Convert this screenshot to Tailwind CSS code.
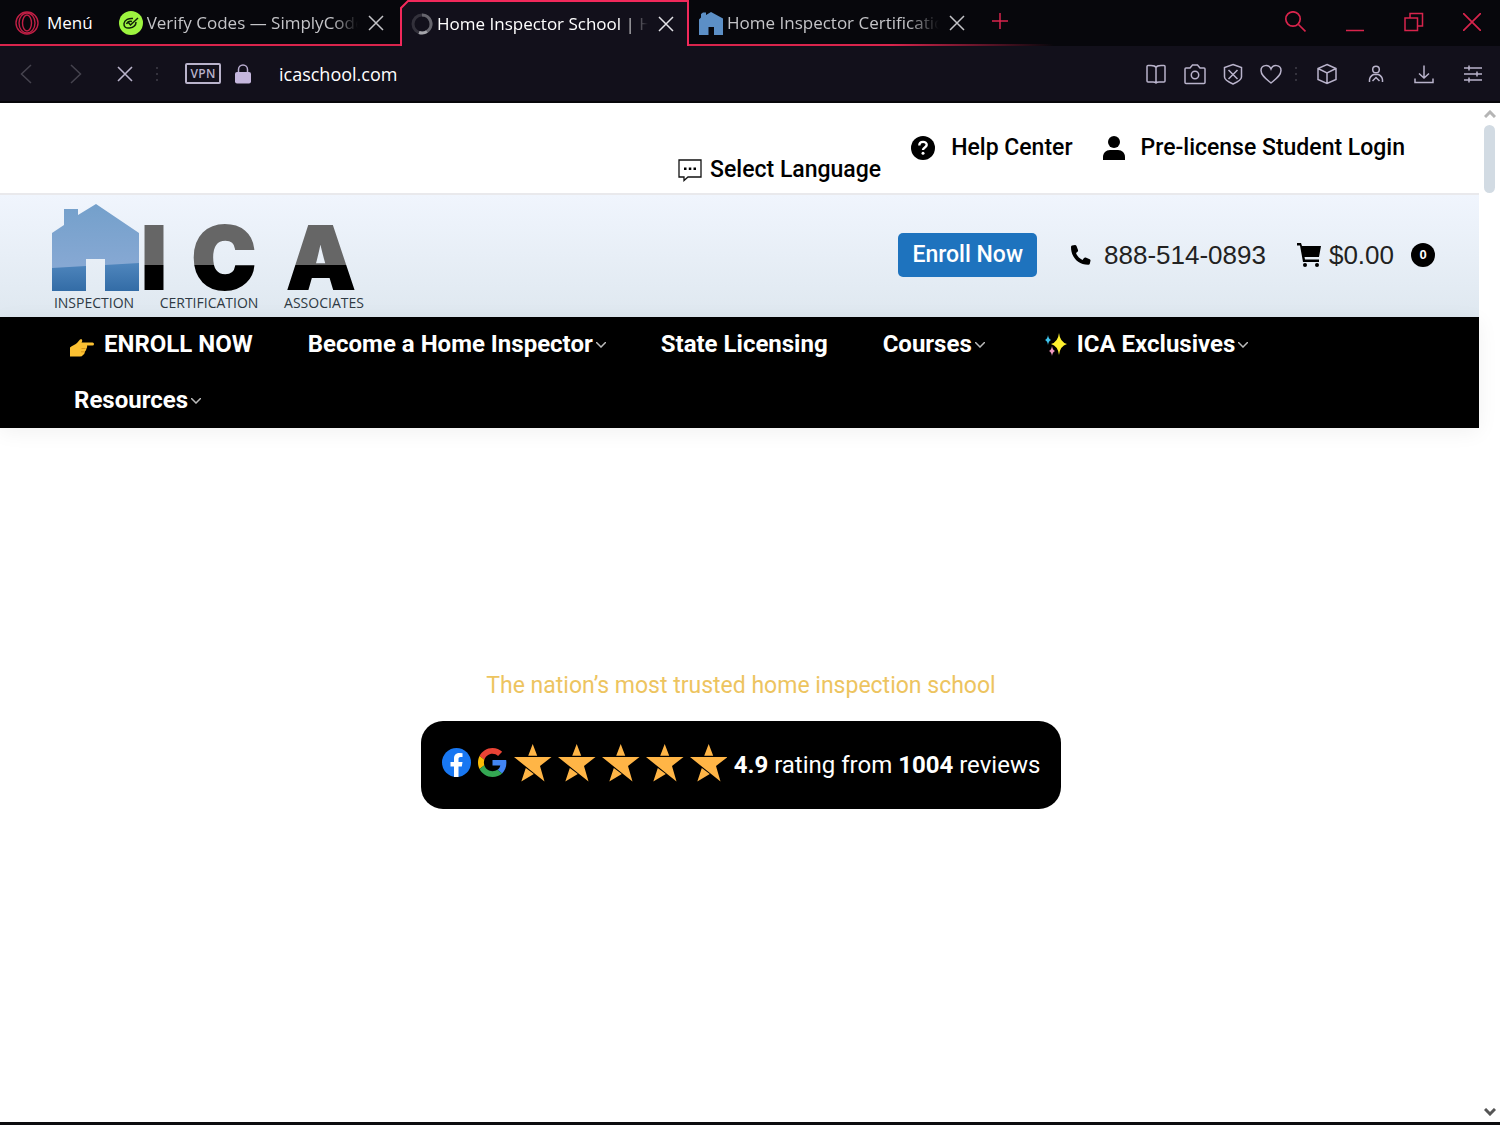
<!DOCTYPE html>
<html lang="en">
  <head>
    <meta charset="UTF-8" />
    <meta name="viewport" content="width=device-width, initial-scale=1.0" />
    <title>Home Inspector School | Home Inspection Training</title>
    <script src="https://cdn.jsdelivr.net/npm/@tailwindcss/browser@4"></script>
  </head>
  <body class="min-h-screen flex flex-col bg-white text-black font-['Roboto',sans-serif]">
    <!-- Browser window -->
    <header class="bg-[#12101b] font-['Open_Sans',sans-serif]">
      <div class="flex h-[46px] bg-[#07070c] text-[17px] text-[#c4c4c8]">
        <div class="flex items-center w-[401px] border-b-2 border-[#d8244c] pl-[15px] pt-[2px]">
          <button class="flex items-center gap-2 text-white">
            <svg class="size-6" viewBox="0 0 24 24" fill="none" stroke="#c01f45" stroke-width="1.4">
              <circle cx="12" cy="12" r="11" />
              <ellipse cx="12" cy="12" rx="8" ry="10" />
              <ellipse cx="12" cy="12" rx="4.500" ry="8" />
            </svg>
            Menú
          </button>
          <div class="flex items-center flex-1 min-w-0 pl-[26px] pr-4">
            <svg class="size-6 shrink-0" viewBox="0 0 24 24">
              <circle cx="12" cy="12" r="12" fill="#9df53f" />
              <path d="M14 7.500c-4-.5-8.500 1-9 5-.4 3.500 2 5 5.500 4.500 4-.5 6.500-2.500 6.500-6M8.500 10.500l3 3.500 7.500-7M7.500 13c1-2 3.500-3 5.500-2.500" fill="none" stroke="#10200a" stroke-width="1.500" />
            </svg>
            <span class="ml-1 mr-[9px] flex-1 min-w-0 overflow-hidden whitespace-nowrap [mask-image:linear-gradient(to_right,black_88%,transparent)]">Verify Codes — SimplyCodes</span>
            <button aria-label="Close tab"><svg class="size-[18px]" viewBox="0 0 18 18" stroke="#c4c4c8" stroke-width="1.500"><path d="M2 2l14 14M16 2L2 16" /></svg></button>
          </div>
        </div>
        <div class="relative flex items-center w-72 bg-[#12101b] border-t-2 border-r-2 border-[#f2295b] pl-[10px] pr-3 text-white">
          <svg class="absolute -left-[1px] -top-[2px] w-3 h-[46px]" viewBox="0 0 12 46">
            <path d="M0 0h9L1 8v38H0z" fill="#07070c" />
            <path d="M12 1H8L1 8v38" fill="none" stroke="#f2295b" stroke-width="2" />
          </svg>
          <svg class="size-[22px] shrink-0" viewBox="0 0 22 22" fill="none" stroke-width="3">
            <circle cx="11" cy="11" r="9" stroke="#33313b" />
            <path d="M11 2a9 9 0 0 1 5 16.500" stroke="#66656d" />
            <path d="M16 18.500a9 9 0 0 1-8 1" stroke="#a5a5ab" />
          </svg>
          <span class="ml-1 mr-[9px] flex-1 min-w-0 overflow-hidden whitespace-nowrap [mask-image:linear-gradient(to_right,black_88%,transparent)]">Home Inspector School | Home</span>
          <button aria-label="Close tab"><svg class="size-[18px]" viewBox="0 0 18 18" stroke="#e4e4e8" stroke-width="1.500"><path d="M2 2l14 14M16 2L2 16" /></svg></button>
        </div>
        <div class="flex items-center flex-1 min-w-0 border-b-2 [border-image:linear-gradient(to_right,#d8244c_25%,#07070c_45%)_1] pl-[10px] pr-[19px] pt-[2px]">
          <div class="flex items-center w-[267px]">
            <svg class="size-6 shrink-0" viewBox="0 0 24 24"><path d="M0 24V8.500l2-2V3l2-1.500h3V4L12 1l12 6.500V24h-9v-8H9.500v8z" fill="#5c8fc6" /></svg>
            <span class="ml-1 mr-[9px] flex-1 min-w-0 overflow-hidden whitespace-nowrap [mask-image:linear-gradient(to_right,black_85%,transparent)]">Home Inspector Certification</span>
            <button aria-label="Close tab"><svg class="size-[18px]" viewBox="0 0 18 18" stroke="#c4c4c8" stroke-width="1.500"><path d="M2 2l14 14M16 2L2 16" /></svg></button>
          </div>
          <button aria-label="New tab" class="ml-[26px] mb-1"><svg class="size-4" viewBox="0 0 16 16" stroke="#d8244c" stroke-width="1.500"><path d="M8 0v16M0 8h16" /></svg></button>
          <div class="ml-auto flex items-center gap-[39px] pb-[2px]">
            <button aria-label="Search tabs"><svg class="size-[22px]" viewBox="0 0 22 22" fill="none" stroke="#d8244c" stroke-width="1.700"><circle cx="9" cy="8" r="7.200" /><path d="M14.500 13.500l7 7" /></svg></button>
            <button aria-label="Minimize"><svg class="size-5" viewBox="0 0 20 20" stroke="#d8244c" stroke-width="1.500"><path d="M1 18.500h18" /></svg></button>
            <button aria-label="Restore"><svg class="size-5" viewBox="0 0 20 20" fill="none" stroke="#d8244c" stroke-width="1.500"><path d="M1 6h12.500v12.500H1zM6 6V1.500h12.500v12.500h-5" /></svg></button>
            <button aria-label="Close"><svg class="size-[18px]" viewBox="0 0 18 18" stroke="#d8244c" stroke-width="1.700"><path d="M0 0l18 18M18 0L0 18" /></svg></button>
          </div>
        </div>
      </div>

      <div class="flex items-center h-[57px] border-b-2 border-[#06060a] pl-[20px] pr-[18px] text-[#b9b3cb]">
        <button aria-label="Back"><svg class="w-3 h-5" viewBox="0 0 12 20" fill="none" stroke="#45434e" stroke-width="1.500"><path d="M11 1L1.500 10l9.500 9" /></svg></button>
        <button aria-label="Forward" class="ml-[38px]"><svg class="w-3 h-5" viewBox="0 0 12 20" fill="none" stroke="#45434e" stroke-width="1.500"><path d="M1 1l9.500 9L1 19" /></svg></button>
        <button aria-label="Stop" class="ml-[35px]"><svg class="size-4" viewBox="0 0 16 16" stroke="currentColor" stroke-width="1.600"><path d="M1 1l14 14M15 1L1 15" /></svg></button>
        <svg class="ml-[23px] w-[3px] h-4" viewBox="0 0 3 16" fill="#34323d"><path d="M0 1h2v2H0zM0 7h2v2H0zM0 13h2v2H0z" /></svg>
        <button class="ml-[26px] w-9 h-[21px] border-2 border-current rounded-[2px] text-[12px] leading-[16px] font-semibold tracking-wide">VPN</button>
        <svg class="ml-[14px] w-4 h-5" viewBox="0 0 16 20"><path d="M3.500 9V5.500a4.500 4.500 0 0 1 9 0V9" fill="none" stroke="#b9add0" stroke-width="1.500" /><rect y="8" width="16" height="11.500" rx="2" fill="#c5b7dd" /></svg>
        <input type="text" aria-label="Address" value="icaschool.com" class="ml-7 flex-1 min-w-0 bg-transparent text-lg text-white outline-none" />
        <div class="flex items-center">
          <button aria-label="Reader"><svg class="w-5 h-[22px]" viewBox="0 0 20 22" fill="none" stroke="currentColor" stroke-width="1.500"><path d="M10 4.500C9 2.500 7 2.500 5 2.500H2q-1 0-1 1V18q0 1 1 1h5q2 0 3 1 1-1 3-1h5q1 0 1-1V3.500q0-1-1-1h-3c-2 0-4 0-5 2zM10 4.500V20" /></svg></button>
          <button aria-label="Snapshot" class="ml-[18px]"><svg class="size-[22px]" viewBox="0 0 22 22" fill="none" stroke="currentColor" stroke-width="1.500"><path d="M2 5h4l2.500-3h5L16 5h4q1 0 1 1v13.500q0 1-1 1H2q-1 0-1-1V6q0-1 1-1z" /><circle cx="11" cy="12" r="3.700" /></svg></button>
          <button aria-label="Ad blocker" class="ml-[17px]"><svg class="w-5 h-[22px]" viewBox="0 0 20 22" fill="none" stroke="currentColor" stroke-width="1.500"><path d="M10 1.500l8.500 3V14c0 3-4 5-8.500 7-4.500-2-8.500-4-8.500-7V4.500zM5.500 7l9 9M14.500 7l-9 9" /></svg></button>
          <button aria-label="Bookmark" class="ml-[17px]"><svg class="size-[22px]" viewBox="0 0 22 22" fill="none" stroke="currentColor" stroke-width="1.500"><path d="M11 20C6 16 1 12.500 1 7.500c0-6 8-6.500 10-1.500 2-5 10-4.500 10 1.500 0 5-5 8.500-10 12.500z" /></svg></button>
          <svg class="ml-[13px] w-[3px] h-4" viewBox="0 0 3 16" fill="#34323d"><path d="M0 1h2v2H0zM0 7h2v2H0zM0 13h2v2H0z" /></svg>
          <button aria-label="Extensions" class="ml-[19px]"><svg class="w-5 h-[22px]" viewBox="0 0 20 22" fill="none" stroke="currentColor" stroke-width="1.500"><path d="M10 1.500l9 4v11l-9 4-9-4v-11zM1 5.500l9 4.500 9-4.500M10 10v10.500" /></svg></button>
          <button aria-label="Profile" class="ml-[31px]"><svg class="w-4 h-5" viewBox="0 0 16 20" fill="none" stroke="currentColor" stroke-width="1.500"><circle cx="8" cy="5.500" r="3.300" /><path d="M1.500 18v-2c0-2 1.500-4 4-5.500h5c2.500 1.500 4 3.500 4 5.500v2M4.500 17L8 13.500l3.500 3.500" /></svg></button>
          <button aria-label="Downloads" class="ml-[30px]"><svg class="size-5" viewBox="0 0 20 20" fill="none" stroke="currentColor" stroke-width="1.500"><path d="M10 1.500V14M5 9.500l5 4.500 5-4.500M1 14.500v4h18v-4" /></svg></button>
          <button aria-label="Easy setup" class="ml-[30px]"><svg class="w-[18px] h-5" viewBox="0 0 18 20" fill="none" stroke="currentColor" stroke-width="1.500"><path d="M0 4h18M0 10h18M0 16h18M5 1.500v5M13 7.500v5M5 13.500v5" /></svg></button>
        </div>
      </div>
    </header>

    <div class="flex flex-1">
      <main class="flex-1 flex flex-col min-w-0">
        <!-- Top links -->
        <div class="flex items-start justify-end h-[90px] pr-[74px] text-[23px] font-medium leading-7">
          <a href="#" class="flex items-center gap-2 mt-[53px]">
            <svg class="size-6" viewBox="0 0 24 24"><path d="M1 2h22v17H10l-4 3.500V19H1z" fill="none" stroke="#111" stroke-width="1.300" /><path d="M6 9.500h2.500V12H6zM10.800 9.500h2.500V12h-2.500zM15.500 9.500H18V12h-2.500z" /></svg>
            Select Language
          </a>
          <a href="#" class="flex items-center gap-4 mt-[31px] ml-[30px]">
            <svg class="size-6" viewBox="0 0 24 24"><circle cx="12" cy="12" r="12" /><path d="M8.300 9.500c0-5 7.600-4.500 7.400-.6C15.600 11.500 12 11.500 12 14" fill="none" stroke="#fff" stroke-width="2.400" /><circle cx="12" cy="17.300" r="1.500" fill="#fff" /></svg>
            Help Center
          </a>
          <a href="#" class="flex items-center gap-4 mt-[31px] ml-[30px]">
            <svg class="w-[22px] h-6" viewBox="0 0 22 24"><circle cx="11" cy="6" r="6" /><path d="M0 24v-3c0-4 3-7 7-7h8c4 0 7 3 7 7v3z" /></svg>
            Pre-license Student Login
          </a>
        </div>

        <!-- Logo and contact -->
        <div class="flex items-center h-[124px] pl-[51px] pr-11 border-t-2 border-[#e9e9ec] bg-linear-to-b from-[#f0f5fd] to-[#dfe8f0]">
          <a href="#" aria-label="Inspection Certification Associates">
            <svg class="w-[318px] h-[108px]" viewBox="0 -1 318 108">
              <defs>
                <linearGradient id="house" x1="0" y1="0" x2="0" y2="1">
                  <stop offset="0" stop-color="#74a0cb" /><stop offset="0.700" stop-color="#86a8d3" />
                </linearGradient>
                <linearGradient id="base" x1="0" y1="0" x2="0" y2="1">
                  <stop offset="0" stop-color="#4f86bd" /><stop offset="1" stop-color="#336ca6" />
                </linearGradient>
                <linearGradient id="letters" gradientUnits="userSpaceOnUse" x1="0" y1="24" x2="0" y2="88">
                  <stop offset="0.590" stop-color="#666" /><stop offset="0.590" stop-color="#000" />
                </linearGradient>
              </defs>
              <path d="M1 88V30l12-8V6h14v6L45 1l43 29v58H54V56H35v32z" fill="url(#house)" />
              <path d="M1 65l34-2v25H1zM54 62l34-2v28H54z" fill="url(#base)" />
              <g fill="url(#letters)" stroke="url(#letters)" stroke-width="2" font-family="Inter, sans-serif" font-weight="900" font-size="86" text-anchor="middle">
                <text x="103" y="86">I</text>
                <text x="173" y="86">C</text>
                <text x="270" y="86">A</text>
              </g>
              <g fill="#2f3a44" font-family="Open Sans, sans-serif" font-size="14" text-anchor="middle">
                <text x="43" y="105">INSPECTION</text>
                <text x="158" y="105">CERTIFICATION</text>
                <text x="273" y="105">ASSOCIATES</text>
              </g>
            </svg>
          </a>
          <div class="ml-auto flex items-center pb-[2px] text-[26px] text-[#222] font-['Liberation_Sans',sans-serif]">
            <button class="h-11 px-[14px] rounded-[5px] bg-[#1e73be] text-white text-[23px] font-medium font-['Roboto',sans-serif]">Enroll Now</button>
            <a href="#" class="flex items-center gap-3 ml-[33px]">
              <svg class="w-[22px] h-[22px]" viewBox="0 0 22 22"><path d="M2 1.500L5 1q1 0 1.500 1l1.500 4q.3 1-.5 1.700L6 9c1 3 3.500 5.500 6.500 7l1.500-2q.7-.8 1.700-.5l4 1.800q1 .5.800 1.500l-.7 3q-.3 1-1.300 1C8 21 1 13 1 3q0-1.200 1-1.500z" fill="#000" /></svg>
              888-514-0893
            </a>
            <a href="#" class="flex items-center ml-[31px]">
              <svg class="w-6 h-6" viewBox="0 0 24 24"><path d="M0 0h4l1 3h19l-2 11H7.500l.5 2.500h14V19H6L3 2.500H0z" /><circle cx="8" cy="22" r="2" /><circle cx="20" cy="22" r="2" /></svg>
              <span class="ml-2">$0.00</span>
              <span class="ml-[17px] size-6 rounded-full bg-black text-white text-[13px] leading-6 font-bold text-center">0</span>
            </a>
          </div>
        </div>

        <!-- Main menu -->
        <nav class="flex flex-wrap gap-x-[55px] gap-y-1 pl-[70px] pr-[74px] pt-px pb-[2px] bg-black text-white text-2xl font-bold shadow-[0_4px_20px_rgba(0,0,0,0.06)]">
          <a href="#" class="flex items-center gap-[10px] h-[52px]">
            <svg class="w-6 h-[18px] mt-2" viewBox="0 0 24 18"><path d="M0 8.500c2-2 5-2.500 7-4.500l3-3.500c2-1 3 .5 1.500 3h11Q24 3.500 24 5t-1.500 1.500H17q.5 1.500-.5 3-.3 2-1.500 3-.3 2.500-2 3.500-1 1.500-3 1.500H0z" fill="#fcc132" /><path d="M11.500 9.500h4M11 12.800h3.500" stroke="#d99518" /></svg>
            ENROLL NOW
          </a>
          <a href="#" class="flex items-center gap-[3px] h-[52px]">Become a Home Inspector
            <svg class="w-[10px] h-[6px] mt-[2px]" viewBox="0 0 10 6" fill="none" stroke="#bbb" stroke-width="1.500"><path d="M0 0l5 5 5-5" /></svg>
          </a>
          <a href="#" class="flex items-center h-[52px]">State Licensing</a>
          <a href="#" class="flex items-center gap-[3px] h-[52px]">Courses
            <svg class="w-[10px] h-[6px] mt-[2px]" viewBox="0 0 10 6" fill="none" stroke="#bbb" stroke-width="1.500"><path d="M0 0l5 5 5-5" /></svg>
          </a>
          <a href="#" class="flex items-center gap-[3px] h-[52px] pl-1">
            <svg class="w-6 h-6 mr-[6px]" viewBox="0 0 24 24"><path d="M15 1q1 9 8 11-7 2-8 11-1-9-8-11 7-2 8-11z" fill="#fff12e" /><path d="M4 3q.5 4 3 5-2.500 1-3 5-.5-4-3-5 2.500-1 3-5z" fill="#3fc4ec" /><path d="M8 14q.5 4 3 5-2.500 1-3 5-.5-4-3-5 2.500-1 3-5z" fill="#f09ac0" /></svg>
            ICA Exclusives
            <svg class="w-[10px] h-[6px] mt-[2px]" viewBox="0 0 10 6" fill="none" stroke="#bbb" stroke-width="1.500"><path d="M0 0l5 5 5-5" /></svg>
          </a>
          <a href="#" class="flex items-center gap-[3px] h-[52px] pl-1">Resources
            <svg class="w-[10px] h-[6px] mt-[2px]" viewBox="0 0 10 6" fill="none" stroke="#bbb" stroke-width="1.500"><path d="M0 0l5 5 5-5" /></svg>
          </a>
        </nav>

        <!-- Reviews -->
        <section class="flex flex-col items-center pt-[242px] pb-20 pl-[3px] text-2xl">
          <p class="text-[23px] leading-8 text-[#edc45f]">The nation’s most trusted home inspection school</p>
          <div class="flex items-center gap-[7px] mt-[19px] h-[88px] px-[21px] rounded-[22px] bg-black text-white">
            <svg class="size-[29px] mb-[6px]" viewBox="0 0 29 29"><circle cx="14.500" cy="14.500" r="14.500" fill="#1877f2" /><path d="M12 29V18.500H8.500V14H12v-3.500C12 6.500 14.500 5 17.500 5q1.500 0 3 .3V9h-2c-1.700 0-2 1-2 2.200V14h4l-.7 4.500h-3.300V29z" fill="#fff" /></svg>
            <svg class="size-[29px] mb-[6px]" viewBox="0 0 48 48">
              <path fill="#ea4335" d="M24 9.500c3.540 0 6.710 1.220 9.210 3.600l6.850-6.850C35.900 2.380 30.470 0 24 0 14.620 0 6.510 5.380 2.560 13.220l7.980 6.190C12.430 13.720 17.740 9.500 24 9.500z" />
              <path fill="#4285f4" d="M46.980 24.550c0-1.570-.15-3.090-.38-4.550H24v9.020h12.940c-.58 2.960-2.260 5.480-4.780 7.180l7.730 6c4.510-4.180 7.090-10.360 7.090-17.650z" />
              <path fill="#fbbc05" d="M10.530 28.590c-.48-1.450-.76-2.990-.76-4.590s.27-3.140.76-4.590l-7.980-6.190C.92 16.460 0 20.120 0 24c0 3.880.92 7.540 2.560 10.780l7.970-6.190z" />
              <path fill="#34a853" d="M24 48c6.480 0 11.930-2.130 15.890-5.810l-7.730-6c-2.150 1.450-4.920 2.300-8.160 2.300-6.260 0-11.570-4.220-13.470-9.910l-7.980 6.190C6.510 42.620 14.620 48 24 48z" />
            </svg>
            <svg class="w-[213px] h-[38px] mb-1" viewBox="0 0 213 38" role="img" aria-label="5 stars">
              <defs>
                <path id="star" d="M18.700 0l4.500 11.700h-9zM0 13h37.500L26 22l4.500 15.500zM7.300 37.500l4.500-13.500 8 6z" />
              </defs>
              <g fill="#ffb546">
                <use href="#star" /><use href="#star" x="44" /><use href="#star" x="88" /><use href="#star" x="132" /><use href="#star" x="176" />
              </g>
            </svg>
            <p><b>4.9</b> rating from <b>1004</b> reviews</p>
          </div>
        </section>
      </main>

      <!-- Scrollbar -->
      <div class="flex flex-col items-center w-[21px] pt-[7px] pb-[6px]">
        <svg class="w-3 h-2" viewBox="0 0 12 8" fill="none" stroke="#b5b5b5" stroke-width="3"><path d="M1 7l5-5 5 5" /></svg>
        <div class="mt-[7px] w-[11px] h-[68px] rounded-full bg-[#d2dbe3]"></div>
        <svg class="mt-auto w-3 h-2" viewBox="0 0 12 8" fill="none" stroke="#555" stroke-width="3"><path d="M1 1l5 5 5-5" /></svg>
      </div>
    </div>
    <div class="h-[3px] bg-[#0c0c0e]"></div>
  </body>
</html>
